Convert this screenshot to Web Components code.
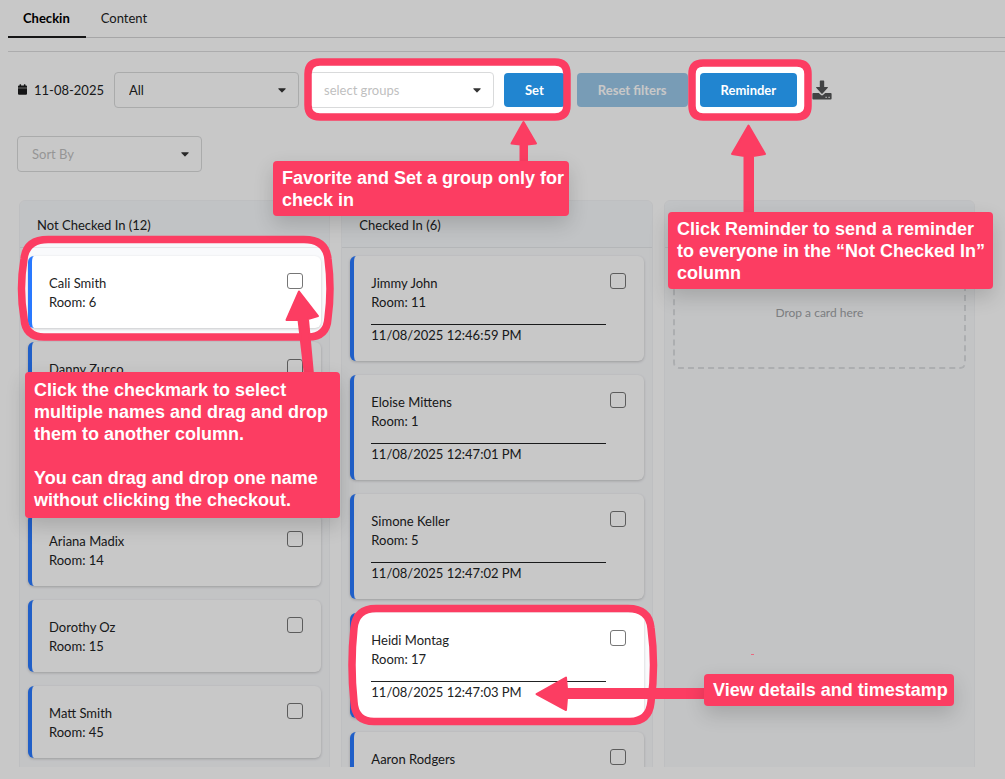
<!DOCTYPE html>
<html lang="en">
<head>
<meta charset="utf-8">
<meta name="viewport" content="width=device-width, initial-scale=1">
<title>Checkin</title>
<style>
  body {
    margin: 0;
    background: #fff;
    color: #212223;
    font: 13px/19px Lato, "Liberation Sans", sans-serif;
  }
</style>
</head>
<body>
<checkin-page></checkin-page>

<script>
class TabLink extends HTMLElement {
  constructor() {
    super();
    this.attachShadow({ mode: "open" });
    this.shadowRoot.innerHTML = `
    <style>
      :host {
        display: block;
        margin-bottom: -1px;
      }
      a {
        display: block;
        padding: 9px 16px 8px 15px;
        border-bottom: 2px solid transparent;
        color: inherit;
        text-decoration: none;
      }
      :host([active]) a {
        border-color: #1b1c1d;
        color: #000;
        font-weight: 700;
      }
    </style>
    <a href="#"><slot></slot></a>
    `;
  }
}

class DropDown extends HTMLElement {
  constructor() {
    super();
    this.attachShadow({ mode: "open" });
    this.shadowRoot.innerHTML = `
    <style>
      :host {
        display: grid;
        align-items: center;
        width: 185px;
        flex: none;
      }
      select, svg {
        grid-area: 1 / 1;
      }
      select {
        appearance: none;
        box-sizing: border-box;
        width: 100%;
        height: 36px;
        margin: 0;
        padding: 0 32px 0 14px;
        border: 1px solid #d9dadb;
        border-radius: 4px;
        background: #fff;
        color: inherit;
        font: inherit;
      }
      :host([empty]) select {
        color: #bfbfbf;
      }
      svg {
        justify-self: end;
        margin-right: 13px;
        pointer-events: none;
      }
    </style>
    <select><option></option></select>
    <svg width="8" height="5" viewBox="0 0 8 5"><path d="M0.6 0.3h6.8q.5.2.2.6L4.4 4.3q-.4.4-.8 0L.4.9Q.1.5.6.3z" fill="#333"/></svg>
    `;
  }

  connectedCallback() {
    const select = this.shadowRoot.querySelector("select");
    select.setAttribute("aria-label", this.getAttribute("label"));
    this.shadowRoot.querySelector("option").textContent = this.getAttribute("value");
  }
}

class BlueButton extends HTMLElement {
  constructor() {
    super();
    this.attachShadow({ mode: "open" });
    this.shadowRoot.innerHTML = `
    <style>
      :host {
        display: block;
        flex: none;
      }
      button {
        display: block;
        height: 34px;
        padding: 0 21px;
        border: 0;
        border-radius: 4px;
        background: #2185d0;
        color: #fff;
        font: inherit;
        font-weight: 700;
      }
      button:disabled {
        opacity: .45;
      }
    </style>
    <button type="button"><slot></slot></button>
    `;
  }

  connectedCallback() {
    this.shadowRoot.querySelector("button").disabled = this.hasAttribute("disabled");
  }
}

class PersonCard extends HTMLElement {
  constructor() {
    super();
    this.attachShadow({ mode: "open" });
    this.shadowRoot.innerHTML = `
    <style>
      :host {
        display: flex;
        justify-content: space-between;
        box-sizing: border-box;
        min-height: 72px;
        padding: 17px 18px 15px 17px;
        border-left: 4px solid #2979ff;
        border-radius: 6px;
        background: #fff;
        box-shadow: 0 1px 3px rgba(0, 0, 0, .2);
      }
      .info {
        flex: 1;
        margin-right: 4px;
        padding-top: 1px;
      }
      label, .room {
        display: block;
      }
      input {
        appearance: none;
        flex: none;
        width: 16px;
        height: 16px;
        margin: 0;
        border: 1px solid #767676;
        border-radius: 3px;
        background: #fff;
      }
      .time {
        display: none;
        margin-top: 12px;
        border-top: 1px solid #212223;
        padding-top: 1px;
      }
      :host([timed]) .time {
        display: block;
      }
      :host([timed]) {
        min-height: 105px;
      }
    </style>
    <div class="info">
      <label for="pick"><slot></slot></label>
      <slot name="room" class="room"></slot>
      <slot name="time" class="time"></slot>
    </div>
    <input type="checkbox" id="pick">
    `;
  }
}

class BoardColumn extends HTMLElement {
  constructor() {
    super();
    this.attachShadow({ mode: "open" });
    this.shadowRoot.innerHTML = `
    <style>
      :host {
        display: block;
        border: 1px solid #f3f4f6;
        border-radius: 6px 6px 0 0;
        background: #f9fafc;
      }
      header {
        min-height: 20px;
        padding: 15px 17px 11px;
        border-bottom: 1px solid #e6e8eb;
        border-radius: 6px 6px 0 0;
        background: #f7f9fb;
      }
      .list {
        display: grid;
        gap: 14px;
        padding: 8px;
      }
    </style>
    <header><slot name="title"></slot></header>
    <div class="list"><slot></slot></div>
    `;
  }
}

class DropZone extends HTMLElement {
  constructor() {
    super();
    this.attachShadow({ mode: "open" });
    this.shadowRoot.innerHTML = `
    <style>
      :host {
        display: grid;
        place-items: center;
        box-sizing: border-box;
        height: 113px;
        border: 2px dashed #dcdee1;
        border-radius: 6px;
        color: #a0a2a5;
        font-size: 12px;
      }
    </style>
    <slot></slot>
    `;
  }
}

class CallOut extends HTMLElement {
  constructor() {
    super();
    this.attachShadow({ mode: "open" });
    this.shadowRoot.innerHTML = `
    <style>
      :host {
        position: absolute;
        box-sizing: border-box;
        padding: 6px 4px 5px 9px;
        border-radius: 4px;
        background: #fc3d62;
        color: #fff;
        font: 700 18px/22px "Liberation Sans", Arial, sans-serif;
        box-shadow: 0 8px 20px rgba(0, 0, 0, .16);
      }
      div {
        white-space: pre-line;
      }
    </style>
    <div><slot></slot></div>
    `;
  }
}

// Dimmed layer with cut-out highlights, arrows and notes
class GuideOverlay extends HTMLElement {
  constructor() {
    super();
    this.attachShadow({ mode: "open" });
    const holes = [
      "M320 62H555Q567 62 567 74V105Q567 117 555 117H320Q308 117 308 105V74Q308 62 320 62Z",
      "M703 63H797Q808 63 808 74V106Q808 117 797 117H703Q692 117 692 106V74Q692 63 703 63Z",
      "M48 239.500H304Q326 239.500 328 259Q332 289 328 318Q327 337 308 337H44Q25 337 24 318Q19 289 24 259Q26 239.500 48 239.500Z",
      "M376 608.500H628Q649 608.500 651 628Q656 665 651 702Q649 721.500 630 721.500H374Q355 721.500 354 702Q350 665 354 628Q356 608.500 376 608.500Z"
    ];
    this.shadowRoot.innerHTML = `
    <style>
      :host {
        position: absolute;
        inset: 0;
        overflow: hidden;
        pointer-events: none;
      }
      svg {
        position: absolute;
        width: 100%;
        height: 100%;
      }
    </style>
    <svg aria-hidden="true">
      <path d="M0 0H4000V4000H0Z${holes.join("")}" fill="#000" fill-opacity=".216" fill-rule="evenodd"/>
      <path d="${holes.join("")}" fill="none" stroke="#fc3d62" stroke-width="7.500"/>
      <g fill="#fc3d62" stroke="#fc3d62" stroke-width="2" stroke-linejoin="round">
        <path d="M523.500 122L536 143.500L527 144.500V165H520.500V144.500L511.500 143.500Z"/>
        <path d="M748.500 125.500L765 154L753 156V216H744.500V156L732 154Z"/>
        <path d="M299 291.500L318 316L308 319L313.500 380H305.500L298.500 320L286.500 320Z"/>
        <path d="M536.500 694L566 677.500L567 689H708V698H567L566 710Z"/>
      </g>
      <path d="M751 654.500h3" stroke="#e86a80"/>
    </svg>
    <slot></slot>
    `;
  }
}

class CheckinPage extends HTMLElement {
  constructor() {
    super();
    this.attachShadow({ mode: "open" });
    this.shadowRoot.innerHTML = `
    <style>
      :host {
        position: relative;
        display: flex;
        flex-direction: column;
        box-sizing: border-box;
        height: 100vh;
        padding-bottom: 12px;
        overflow: hidden;
      }
      nav {
        display: flex;
        margin-left: 8px;
        border-bottom: 1px solid #d4d4d5;
      }
      hr {
        width: calc(100% - 8px);
        margin: 13px 0 20px 8px;
        border: 0;
        border-top: 1px solid #dcdcdd;
      }
      .bar {
        display: flex;
        align-items: center;
        gap: 10px;
        padding-left: 17px;
      }
      .date {
        display: flex;
        align-items: center;
        gap: 6px;
        width: 87px;
        white-space: nowrap;
      }
      .buttons {
        display: flex;
        align-items: center;
        gap: 12px;
      }
      .download {
        display: flex;
        margin-left: 2px;
        padding: 0;
        border: 0;
        background: none;
      }
      .sort {
        margin: 28px 0;
      }
      .board {
        display: grid;
        grid-template-columns: repeat(3, minmax(0, 1fr));
        gap: 11px;
        flex: 1;
        min-height: 0;
        margin: 0 30px 0 19px;
        overflow: hidden;
      }
      .groups { left: 273px; top: 161px; width: 296px; }
      .remind { left: 668px; top: 212px; width: 325px; }
      .select { left: 25px; top: 372px; width: 315px; padding-block: 7px; }
      .detail { left: 704px; top: 674px; width: 250px; padding-block: 5px; }
    </style>
    <nav>
      <tab-link active>Checkin</tab-link>
      <tab-link>Content</tab-link>
    </nav>
    <hr>
    <div class="bar">
      <div class="date">
        <svg width="11" height="12" viewBox="0 0 11 12" fill="#1b1c1d"><path d="M1 3.700V2.600Q1 1.600 2 1.600H2.600V.6Q2.600.2 3 .2H3.700Q4.100.2 4.100.6V1.600H6.900V.6Q6.900.2 7.300.2H8Q8.400.2 8.400.6V1.600H9Q10 1.600 10 2.600V3.700ZM1 4.300H10V9.700Q10 10.700 9 10.700H2Q1 10.700 1 9.700Z"/></svg>
        <span>11-08-2025</span>
      </div>
      <drop-down label="Filter" value="All"></drop-down>
      <drop-down label="Groups" value="select groups" empty></drop-down>
      <div class="buttons">
        <blue-button>Set</blue-button>
        <blue-button disabled>Reset filters</blue-button>
        <blue-button>Reminder</blue-button>
        <button class="download" type="button" aria-label="Download">
          <svg width="22" height="20" viewBox="0 0 22 20" fill="#555657"><path d="M9.500.5H12.500Q13.200.5 13.200 1.200V7H16.500Q17.300 7 16.800 7.700L11.600 13.500Q11 14.200 10.400 13.500L5.200 7.700Q4.700 7 5.500 7H8.800V1.200Q8.800.5 9.500.5Z"/><path fill-rule="evenodd" d="M2.300 13H7.800L10 15.100Q11 16 12 15.100L14.200 13H19.700Q20.600 13 20.600 13.900V18.600Q20.600 19.500 19.700 19.500H2.300Q1.400 19.500 1.400 18.600V13.900Q1.400 13 2.300 13ZM14.500 16.800V18H15.700V16.800ZM17.500 16.800V18H18.700V16.800Z"/></svg>
        </button>
      </div>
    </div>
    <div class="bar sort">
      <drop-down label="Sort By" value="Sort By" empty></drop-down>
    </div>
    <main class="board">
      <board-column>
        <span slot="title">Not Checked In (12)</span>
        <person-card>Cali Smith<span slot="room">Room: 6</span></person-card>
        <person-card>Danny Zucco</person-card>
        <person-card></person-card>
        <person-card>Ariana Madix<span slot="room">Room: 14</span></person-card>
        <person-card>Dorothy Oz<span slot="room">Room: 15</span></person-card>
        <person-card>Matt Smith<span slot="room">Room: 45</span></person-card>
      </board-column>
      <board-column>
        <span slot="title">Checked In (6)</span>
        <person-card timed>Jimmy John<span slot="room">Room: 11</span><span slot="time">11/08/2025 12:46:59 PM</span></person-card>
        <person-card timed>Eloise Mittens<span slot="room">Room: 1</span><span slot="time">11/08/2025 12:47:01 PM</span></person-card>
        <person-card timed>Simone Keller<span slot="room">Room: 5</span><span slot="time">11/08/2025 12:47:02 PM</span></person-card>
        <person-card timed>Heidi Montag<span slot="room">Room: 17</span><span slot="time">11/08/2025 12:47:03 PM</span></person-card>
        <person-card timed>Aaron Rodgers</person-card>
      </board-column>
      <board-column>
        <span slot="title">&nbsp;</span>
        <drop-zone>Drop a card here</drop-zone>
      </board-column>
    </main>
    <guide-overlay>
      <call-out class="groups">Favorite and Set a group only for check in</call-out>
      <call-out class="remind">Click Reminder to send a reminder to everyone in the “Not Checked In” column</call-out>
      <call-out class="select">Click the checkmark to select multiple names and drag and drop them to another column.

You can drag and drop one name without clicking the checkout.</call-out>
      <call-out class="detail">View details and timestamp</call-out>
    </guide-overlay>
    `;
  }
}

customElements.define("tab-link", TabLink);
customElements.define("drop-down", DropDown);
customElements.define("blue-button", BlueButton);
customElements.define("person-card", PersonCard);
customElements.define("board-column", BoardColumn);
customElements.define("drop-zone", DropZone);
customElements.define("call-out", CallOut);
customElements.define("guide-overlay", GuideOverlay);
customElements.define("checkin-page", CheckinPage);
</script>
</body>
</html>
